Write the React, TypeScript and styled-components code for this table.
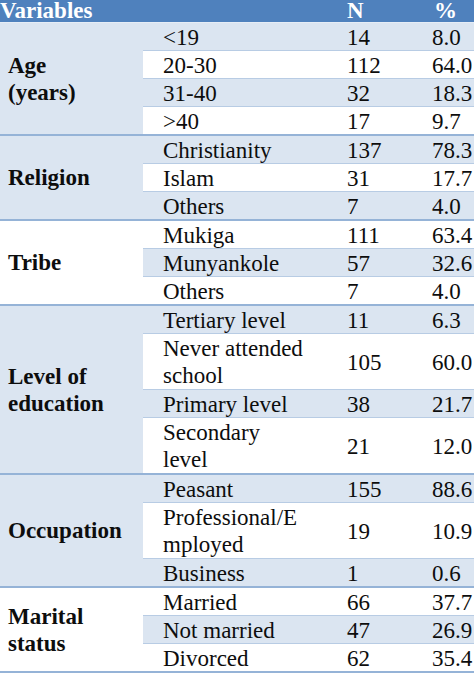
import React from "react";
import styled, { createGlobalStyle } from "styled-components";

const BLUE = "#4f81bd";
const BAND = "#dbe5f1";
const LINE = "#b8cce4";
const GROUP_LINE = "#95b3d7";

type Row = { label: string[]; n: number; pct: string; shaded: boolean };
type Group = { label: string[]; shaded: boolean; rows: Row[] };

const groups: Group[] = [
  {
    label: ["Age", "(years)"],
    shaded: true,
    rows: [
      { label: ["<19"], n: 14, pct: "8.0", shaded: true },
      { label: ["20-30"], n: 112, pct: "64.0", shaded: false },
      { label: ["31-40"], n: 32, pct: "18.3", shaded: true },
      { label: [">40"], n: 17, pct: "9.7", shaded: false },
    ],
  },
  {
    label: ["Religion"],
    shaded: true,
    rows: [
      { label: ["Christianity"], n: 137, pct: "78.3", shaded: true },
      { label: ["Islam"], n: 31, pct: "17.7", shaded: false },
      { label: ["Others"], n: 7, pct: "4.0", shaded: true },
    ],
  },
  {
    label: ["Tribe"],
    shaded: false,
    rows: [
      { label: ["Mukiga"], n: 111, pct: "63.4", shaded: false },
      { label: ["Munyankole"], n: 57, pct: "32.6", shaded: true },
      { label: ["Others"], n: 7, pct: "4.0", shaded: false },
    ],
  },
  {
    label: ["Level of", "education"],
    shaded: true,
    rows: [
      { label: ["Tertiary level"], n: 11, pct: "6.3", shaded: true },
      { label: ["Never attended", "school"], n: 105, pct: "60.0", shaded: false },
      { label: ["Primary level"], n: 38, pct: "21.7", shaded: true },
      { label: ["Secondary", "level"], n: 21, pct: "12.0", shaded: false },
    ],
  },
  {
    label: ["Occupation"],
    shaded: true,
    rows: [
      { label: ["Peasant"], n: 155, pct: "88.6", shaded: true },
      { label: ["Professional/E", "mployed"], n: 19, pct: "10.9", shaded: false },
      { label: ["Business"], n: 1, pct: "0.6", shaded: true },
    ],
  },
  {
    label: ["Marital", "status"],
    shaded: false,
    rows: [
      { label: ["Married"], n: 66, pct: "37.7", shaded: false },
      { label: ["Not married"], n: 47, pct: "26.9", shaded: true },
      { label: ["Divorced"], n: 62, pct: "35.4", shaded: false },
    ],
  },
];

const GlobalStyle = createGlobalStyle`
  html, body {
    margin: 0;
    padding: 0;
    background: #ffffff;
    overflow: hidden;
  }
  body {
    font-family: "Liberation Serif", "Times New Roman", serif;
  }
`;

const Table = styled.table`
  width: 474px;
  table-layout: fixed;
  border-collapse: collapse;
  font-size: 23px;
  color: #0d0d0d;
`;

const HeadCell = styled.th<{ $pad: number }>`
  background: ${BLUE};
  color: #ffffff;
  font-weight: bold;
  text-align: left;
  line-height: 22px;
  padding: 0 0 0 ${({ $pad }) => $pad}px;
  border-bottom: 1px solid #e6edf6;
  white-space: nowrap;
`;

const GroupCell = styled.td<{ $shaded: boolean }>`
  background: ${({ $shaded }) => ($shaded ? BAND : "#ffffff")};
  font-weight: bold;
  line-height: 27px;
  padding: 0 0 0 8px;
  vertical-align: middle;
  border-bottom: 2px solid ${GROUP_LINE};
  white-space: nowrap;
`;

const Cell = styled.td<{ $shaded: boolean; $last: boolean; $multi: boolean }>`
  background: ${({ $shaded }) => ($shaded ? BAND : "#ffffff")};
  line-height: ${({ $multi }) => ($multi ? 27 : 25)}px;
  padding: ${({ $multi }) => ($multi ? 1 : 2)}px 0 0 20px;
  vertical-align: middle;
  white-space: nowrap;
  border-bottom: ${({ $last }) =>
    $last ? `2px solid ${GROUP_LINE}` : `1px solid ${LINE}`};
`;

const Lines = ({ lines }: { lines: string[] }) => (
  <>
    {lines.map((line, i) => (
      <React.Fragment key={i}>
        {i > 0 && <br />}
        {line}
      </React.Fragment>
    ))}
  </>
);

export default function App() {
  return (
    <>
      <GlobalStyle />
      <Table>
        <colgroup>
          <col style={{ width: 143 }} />
          <col style={{ width: 184 }} />
          <col style={{ width: 85 }} />
          <col style={{ width: 62 }} />
        </colgroup>
        <thead>
          <tr>
            <HeadCell $pad={0} colSpan={2}>
              Variables
            </HeadCell>
            <HeadCell $pad={20}>N</HeadCell>
            <HeadCell $pad={22}>%</HeadCell>
          </tr>
        </thead>
        <tbody>
          {groups.map((group) =>
            group.rows.map((row, i) => {
              const last = i === group.rows.length - 1;
              const multi = row.label.length > 1;
              return (
                <tr key={group.label.join(" ") + i}>
                  {i === 0 && (
                    <GroupCell $shaded={group.shaded} rowSpan={group.rows.length}>
                      <Lines lines={group.label} />
                    </GroupCell>
                  )}
                  <Cell $shaded={row.shaded} $last={last} $multi={multi}>
                    <Lines lines={row.label} />
                  </Cell>
                  <Cell $shaded={row.shaded} $last={last} $multi={false}>
                    {row.n}
                  </Cell>
                  <Cell $shaded={row.shaded} $last={last} $multi={false}>
                    {row.pct}
                  </Cell>
                </tr>
              );
            })
          )}
        </tbody>
      </Table>
    </>
  );
}
